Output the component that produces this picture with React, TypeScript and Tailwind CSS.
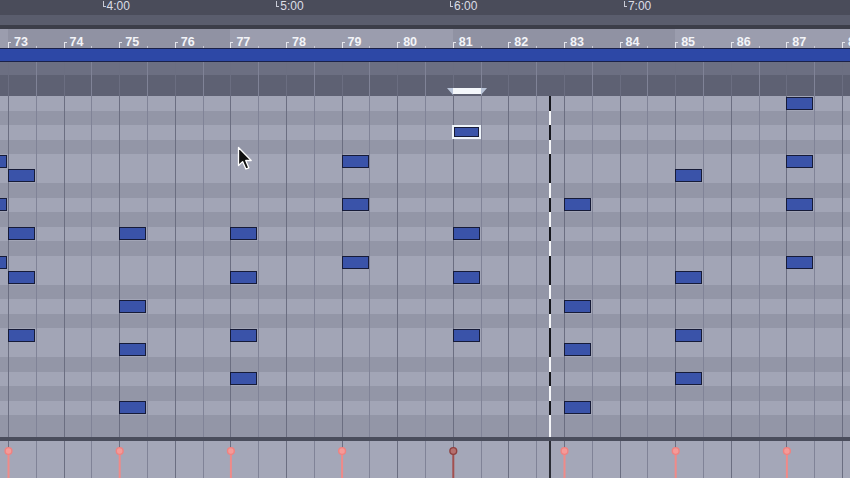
import React from "react";

const BAR = 55.6;
const X0 = 8; // x of bar 73
const ROW = 14.5;
const barX = (b: number) => X0 + (b - 73) * BAR;

// light = white key row, false = black key row (top row is an E)
const KEYS = [true, false, true, false, true, true, false, true, false, true, false, true];
const rows = Array.from({ length: 23 }, (_, i) => KEYS[i % 12]);

const bars = Array.from({ length: 17 }, (_, i) => 72 + i);

// [bar, half, row]
const notes: [number, number, number][] = [
  [72, 1, 4], [72, 1, 7], [72, 1, 11],
  [73, 0, 5], [73, 0, 9], [73, 0, 12], [73, 0, 16],
  [75, 0, 9], [75, 0, 14], [75, 0, 17], [75, 0, 21],
  [77, 0, 9], [77, 0, 12], [77, 0, 16], [77, 0, 19],
  [79, 0, 4], [79, 0, 7], [79, 0, 11],
  [81, 0, 9], [81, 0, 12], [81, 0, 16],
  [83, 0, 7], [83, 0, 14], [83, 0, 17], [83, 0, 21],
  [85, 0, 5], [85, 0, 12], [85, 0, 16], [85, 0, 19],
  [87, 0, 0], [87, 0, 4], [87, 0, 7], [87, 0, 11],
];

const velocityBars = [73, 75, 77, 79, 81, 83, 85, 87];
const timeLabels = ["4:00", "5:00", "6:00", "7:00"];

function VLines() {
  return (
    <div className="pointer-events-none absolute inset-y-0 left-[-47.6px] flex">
      {bars.map((b) => (
        <div key={b} className="flex h-full w-[55.6px] shrink-0 border-l border-[#6b6e81]">
          <div className="flex-1" />
          <div className="flex-1 border-l border-[#808397]" />
        </div>
      ))}
    </div>
  );
}

export default function App() {
  return (
    <div
      className="relative flex h-[478px] w-[850px] flex-col overflow-hidden bg-[#a2a5b6] select-none"
      style={{ fontFamily: '"Liberation Sans", Arial, sans-serif' }}
    >
      {/* Time ruler */}
      <div className="relative h-[15px] shrink-0 bg-[#4a4c5a]">
        {timeLabels.map((t, k) => (
          <div
            key={t}
            className="absolute top-0 flex items-start"
            style={{ left: 102.5 + k * 173.8 }}
          >
            <span className="mt-[1px] h-[6px] w-[3px] border-b border-l border-[#c9cbd6]" />
            <span className="ml-[1px] mt-0 text-[12px] leading-none font-medium text-[#dcdee6]">
              {t}
            </span>
          </div>
        ))}
      </div>
      <div className="h-[10px] shrink-0 bg-[#5a5d6d]" />
      <div className="h-[4px] shrink-0 bg-[#3c3e49]" />

      {/* Bar ruler */}
      <div className="relative h-[19px] shrink-0 overflow-hidden">
        <div className="absolute inset-y-0 left-[-47.6px] flex">
          {bars.map((b) => {
            const group = (((Math.floor((b - 73) / 4)) % 2) + 2) % 2;
            return (
              <div
                key={b}
                className={`relative h-full w-[55.6px] shrink-0 pl-[6px] pt-[7px] ${
                  group === 0 ? "bg-[#9092a3]" : "bg-[#9b9dae]"
                }`}
              >
                <span className="absolute bottom-0 left-0 h-[6px] w-[3px] border-l border-t border-[#e4e5ec]" />
                <span className="absolute bottom-0 left-[27.8px] h-[2px] w-px bg-[#c8c9d4]" />
                <span className="block text-[12.5px] leading-none font-semibold text-[#f3f4f8]">{b}</span>
              </div>
            );
          })}
        </div>
      </div>

      {/* Clip lane */}
      <div className="h-[14px] shrink-0 border-y border-[#1b2148] bg-[#2d48a6]" />

      {/* Marker lanes */}
      <div className="relative h-[13px] shrink-0 bg-[#6c6f82]">
        <VLines />
      </div>
      <div className="relative h-[21px] shrink-0 bg-[#5e6173]">
        <VLines />
        <svg className="absolute left-[446px] top-[13px]" width="42" height="8" viewBox="0 0 42 8">
          <polygon points="1,0 7,0 7,7" fill="#b9c4d8" />
          <rect x="7" y="0" width="28" height="6" fill="#f4f7fb" />
          <polygon points="35,0 41,0 35,7" fill="#b9c4d8" />
        </svg>
      </div>

      {/* Note grid */}
      <div className="relative h-[341px] shrink-0">
        <div className="flex h-full flex-col">
          {rows.map((light, i) => (
            <div
              key={i}
              className={`${i === rows.length - 1 ? "flex-1" : "h-[14.5px] shrink-0"} ${
                light ? "bg-[#a2a5b6]" : "bg-[#9396a7]"
              }`}
            />
          ))}
        </div>
        <VLines />

        {notes.map(([b, h, r], i) => (
          <div
            key={i}
            className="absolute h-[13px] w-[27px] border border-[#161b38] bg-[#3a53a9]"
            style={{ left: barX(b) + h * (BAR / 2), top: r * ROW + 0.8 }}
          />
        ))}

        {/* selected note */}
        <div
          className="absolute h-[14px] w-[29px] border-2 border-[#eef4fa] bg-[#3a53a9] shadow-[inset_0_0_0_1px_#161b38]"
          style={{ left: barX(81) - 1, top: 2 * ROW + 0.3 }}
        />

        {/* playhead */}
        <div className="absolute inset-y-0 left-[549px] flex w-[2px] flex-col">
          {rows.map((light, i) => (
            <div
              key={i}
              className={`${i === rows.length - 1 ? "flex-1" : "h-[14.5px] shrink-0"} ${
                light ? "bg-[#15161c]" : "bg-[#f4f5f8]"
              }`}
            />
          ))}
        </div>

        {/* mouse cursor */}
        <svg className="absolute left-[237px] top-[50px]" width="18" height="26" viewBox="0 0 18 26">
          <path
            d="M1.5 1.5 L1.5 19.5 L5.6 15.6 L8.9 23 L11.8 21.8 L8.7 14.5 L14.2 14.5 Z"
            fill="#111"
            stroke="#fff"
            strokeWidth="1.3"
            strokeLinejoin="round"
          />
        </svg>
      </div>

      {/* separator */}
      <div className="h-[4px] shrink-0 bg-[#4a4d5c]" />

      {/* Velocity lane */}
      <div className="relative flex-1 bg-[#a4a7b8]">
        <VLines />
        <div className="absolute inset-y-0 left-[549px] w-[2px] bg-[#2a2c35]" />
        <svg className="absolute inset-0" width="850" height="37" viewBox="0 0 850 37">
          {velocityBars.map((b) => {
            const x = barX(b) + 0.5;
            const sel = b === 81;
            return (
              <g key={b}>
                <line
                  x1={x}
                  y1={10}
                  x2={x}
                  y2={37}
                  stroke={sel ? "#a3504f" : "#f08a88"}
                  strokeWidth="2"
                />
                <circle
                  cx={x}
                  cy={10}
                  r={3.4}
                  fill={sel ? "#b5706f" : "#f59a98"}
                  stroke={sel ? "#8f4140" : "#ef8280"}
                  strokeWidth="1.4"
                />
              </g>
            );
          })}
        </svg>
      </div>
    </div>
  );
}
